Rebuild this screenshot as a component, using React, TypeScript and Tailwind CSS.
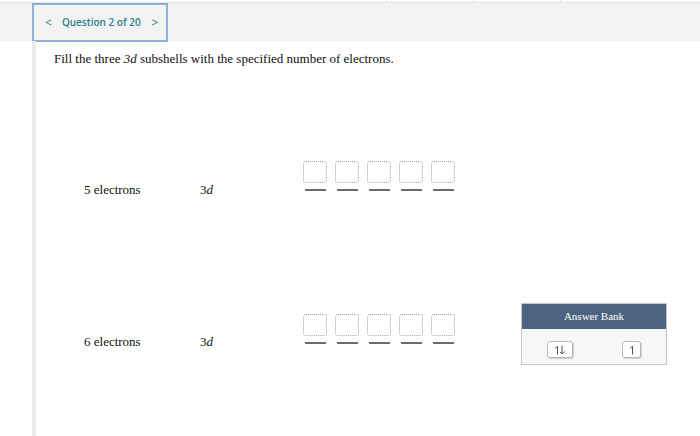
import React from "react";

const serif = { fontFamily: '"Liberation Serif", "Times New Roman", serif' };
const sans = { fontFamily: '"Open Sans", "Noto Sans", sans-serif' };

function Slots() {
  return (
    <div className="flex gap-[8px]">
      {[0, 1, 2, 3, 4].map((i) => (
        <div key={i} className="flex flex-col items-center w-[24px]">
          <div className="w-[24px] h-[22px] border-[1.5px] border-dotted border-[#a3a3a3] rounded-[3px]" />
          <div className="mt-[6px] w-[21px] h-[2px] bg-[#6a6a6a]" />
        </div>
      ))}
    </div>
  );
}

function UpHalf() {
  return (
    <svg width="4" height="10" viewBox="0 0 4 10">
      <path d="M2.5 1 V9.5 M2.5 1 L0.5 3.5" stroke="#555" strokeWidth="1" fill="none" />
    </svg>
  );
}
function DownHalf() {
  return (
    <svg width="5" height="10" viewBox="0 0 5 10">
      <path d="M2 0.5 V9 M2 9 L4.5 6.5 M2 9 L0 7" stroke="#555" strokeWidth="1" fill="none" />
    </svg>
  );
}

export default function App() {
  return (
    <div className="w-[700px] h-[436px] bg-white overflow-hidden flex flex-col" style={serif}>
      <div className="h-[3px] flex border-b border-[#e4e4e4] bg-white">
        <div className="w-[387px] border-r border-[#e4e4e4]" />
        <div className="w-[87px] border-r border-[#e4e4e4]" />
        <div className="w-[87px] border-r border-[#e4e4e4]" />
      </div>
      <div className="h-[38px] flex bg-[#f2f2f2] pl-[32px]">
        <div
          className="w-[136px] shrink-0 h-[39px] border-2 border-[#8eb1d8] flex items-center pl-[11px] text-[10px] font-semibold text-[#2f7f8e] bg-[#f2f2f2] whitespace-nowrap"
          style={sans}
        >
          <span className="text-[12px] font-normal mr-[10px]">&lt;</span>
          <span>Question 2 of 20</span>
          <span className="text-[12px] font-normal ml-[11px]">&gt;</span>
        </div>
      </div>
      <div className="flex flex-1 pl-[32px]">
        <div className="w-[4px] bg-[#ececec]" />
        <div className="flex-1 flex flex-col text-[13px] text-[#111] leading-[15px]">
          <div className="pt-[10px] pl-[18px]">
            Fill the three <i>3d</i> subshells with the specified number of electrons.
          </div>
          <div className="flex items-start mt-[95px] pl-[48px]">
            <div className="w-[116px] mt-[21px]">5 electrons</div>
            <div className="w-[103px] mt-[21px]">
              3<i>d</i>
            </div>
            <Slots />
          </div>
          <div className="flex items-start mt-[107px] pl-[48px]">
            <div className="w-[116px] mt-[30px]">6 electrons</div>
            <div className="w-[103px] mt-[30px]">
              3<i>d</i>
            </div>
            <div className="mt-[10px]">
              <Slots />
            </div>
            <div className="ml-[66px] -mt-[1px] w-[146px] border border-[#c8c8c8] flex flex-col">
              <div className="h-[25px] bg-[#4c6482] text-white text-[11px] flex items-center justify-center">
                Answer Bank
              </div>
              <div className="h-[35px] bg-[#f7f7f7] flex items-start pt-[12px] pl-[25px]">
                <div className="w-[26px] h-[17px] bg-white border border-[#b9b9b9] rounded-[3px] shadow-[1px_1px_0_#cfcfcf] flex items-center justify-center gap-[1px]">
                  <UpHalf />
                  <DownHalf />
                </div>
                <div className="ml-[49px] w-[19px] h-[17px] bg-white border border-[#b9b9b9] rounded-[3px] shadow-[1px_1px_0_#cfcfcf] flex items-center justify-center">
                  <UpHalf />
                </div>
              </div>
            </div>
          </div>
        </div>
      </div>
    </div>
  );
}
